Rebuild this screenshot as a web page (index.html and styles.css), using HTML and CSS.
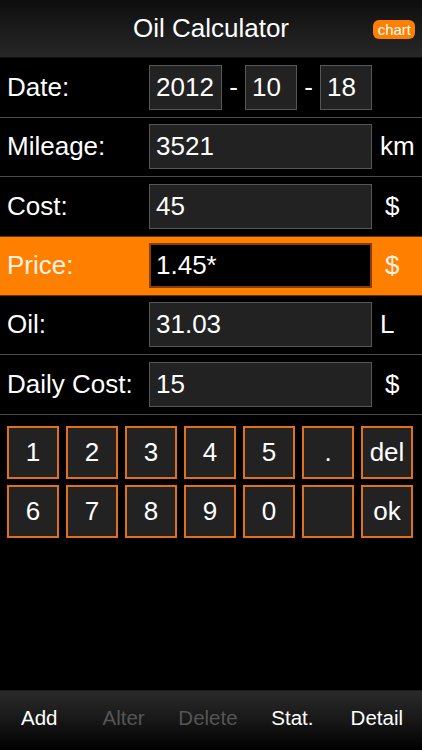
FILE: index.html
```html
<!DOCTYPE html>
<html>
<head>
<meta charset="utf-8">
<link rel="stylesheet" href="styles.css">
</head>
<body>
<div class="app">
  <header class="header">
    <h1 class="title">Oil Calculator</h1>
    <span class="badge">chart</span>
  </header>
  <div class="row">
    <div class="label">Date:</div>
    <div class="date-group">
      <div class="field f-year">2012</div>
      <span class="dash">-</span>
      <div class="field f-small">10</div>
      <span class="dash">-</span>
      <div class="field f-small">18</div>
    </div>
  </div>
  <div class="row">
    <div class="label">Mileage:</div>
    <div class="field f-wide">3521</div>
    <div class="unit">km</div>
  </div>
  <div class="row">
    <div class="label">Cost:</div>
    <div class="field f-wide">45</div>
    <div class="unit unit-dollar">$</div>
  </div>
  <div class="row row-active">
    <div class="label">Price:</div>
    <div class="field f-wide field-active">1.45*</div>
    <div class="unit unit-dollar">$</div>
  </div>
  <div class="row">
    <div class="label">Oil:</div>
    <div class="field f-wide">31.03</div>
    <div class="unit">L</div>
  </div>
  <div class="row">
    <div class="label">Daily Cost:</div>
    <div class="field f-wide">15</div>
    <div class="unit unit-dollar">$</div>
  </div>
  <div class="keypad">
    <div class="key">1</div>
    <div class="key">2</div>
    <div class="key">3</div>
    <div class="key">4</div>
    <div class="key">5</div>
    <div class="key">.</div>
    <div class="key">del</div>
    <div class="key">6</div>
    <div class="key">7</div>
    <div class="key">8</div>
    <div class="key">9</div>
    <div class="key">0</div>
    <div class="key"></div>
    <div class="key">ok</div>
  </div>
  <div class="spacer"></div>
  <nav class="toolbar">
    <span class="tool">Add</span>
    <span class="tool tool-off">Alter</span>
    <span class="tool tool-off">Delete</span>
    <span class="tool">Stat.</span>
    <span class="tool">Detail</span>
  </nav>
</div>
</body>
</html>
```
FILE: styles.css
```css
* { box-sizing: border-box; }
html, body {
  margin: 0;
  padding: 0;
  background: #000;
}
body {
  font-family: "Liberation Sans", Arial, sans-serif;
  color: #fff;
}
.app {
  width: 422px;
  height: 750px;
  display: flex;
  flex-direction: column;
  overflow: hidden;
}
.header {
  position: relative;
  height: 58px;
  flex: none;
  display: flex;
  align-items: center;
  justify-content: center;
  background: linear-gradient(#0e0e0e, #272727);
  border-bottom: 1px solid #111;
}
.title {
  margin: 0;
  font-size: 26px;
  font-weight: normal;
  color: #fff;
}
.badge {
  position: absolute;
  right: 7px;
  top: 20px;
  height: 19px;
  line-height: 19px;
  padding: 0 4px 0 5px;
  border-radius: 6px;
  background: #ff7f00;
  color: #fff;
  font-size: 15px;
}
.row {
  height: 59.5px;
  flex: none;
  display: flex;
  align-items: center;
  border-bottom: 1px solid #4a4a4a;
}
.label {
  width: 149px;
  padding-left: 7px;
  font-size: 26px;
  white-space: nowrap;
}
.field {
  height: 45px;
  line-height: 43px;
  padding-left: 6px;
  background: #222;
  border: 1px solid #575757;
  font-size: 26px;
  color: #fff;
}
.f-wide { width: 223px; }
.f-year { width: 73px; }
.f-small { width: 52px; }
.date-group {
  display: flex;
  align-items: center;
}
.dash {
  width: 23px;
  text-align: center;
  font-size: 26px;
}
.unit {
  padding-left: 8px;
  font-size: 26px;
}
.unit-dollar { padding-left: 13px; }
.row-active {
  background: #ff7f00;
  border-top: 1px solid #6b3300;
  border-bottom: 1px solid #6b3300;
  height: 60px;
  margin-top: -1px;
}
.row-active .label,
.row-active .unit { color: #fff3e6; }
.field-active {
  background: #000;
  border: 2px solid #8a3d00;
  line-height: 41px;
  padding-left: 5px;
}
.keypad {
  display: grid;
  grid-template-columns: repeat(7, 52px);
  grid-auto-rows: 53px;
  column-gap: 7px;
  row-gap: 6px;
  padding: 11px 0 0 7px;
}
.key {
  background: #222;
  border: 2px solid #e0701c;
  display: flex;
  align-items: center;
  justify-content: center;
  font-size: 26px;
  color: #fff;
}
.spacer { flex: 1; }
.toolbar {
  height: 60px;
  flex: none;
  display: grid;
  grid-template-columns: repeat(5, 1fr);
  align-items: center;
  background: linear-gradient(#2a2a2a, #171717 50%, #000);
  border-top: 1px solid #1a1a1a;
  padding-bottom: 5px;
}
.tool {
  text-align: center;
  padding-right: 6px;
  font-size: 20.5px;
  color: #fff;
}
.tool-off { color: #555; }
```
